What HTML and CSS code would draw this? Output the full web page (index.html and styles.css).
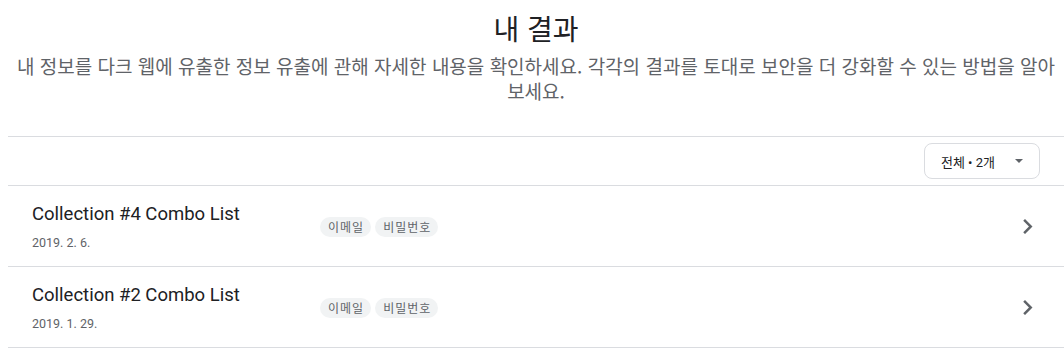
FILE: index.html
```html
<!DOCTYPE html>
<html lang="ko">
<head>
<meta charset="utf-8">
<title>내 결과</title>
<link rel="stylesheet" href="styles.css">
</head>
<body>
<main class="page">
  <header class="header">
    <h1 class="title">내 결과</h1>
    <p class="subtitle">내 정보를 다크 웹에 유출한 정보 유출에 관해 자세한 내용을 확인하세요. 각각의 결과를 토대로 보안을 더 강화할 수 있는 방법을 알아보세요.</p>
  </header>
  <div class="filter-bar">
    <button class="filter" type="button">
      <span class="filter-label">전체 • 2개</span>
      <svg class="caret" width="8" height="4" viewBox="0 0 10 5" aria-hidden="true"><path d="M0 0l5 5 5-5z" fill="#5f6368"/></svg>
    </button>
  </div>
  <ul class="results">
    <li class="result">
      <div class="result-main">
        <div class="result-name">Collection #4 Combo List</div>
        <div class="result-date">2019. 2. 6.</div>
      </div>
      <div class="chips">
        <span class="chip">이메일</span>
        <span class="chip">비밀번호</span>
      </div>
      <svg class="chevron" width="10" height="15" viewBox="8.4 6 8 12" aria-hidden="true"><path d="M10 6L8.59 7.41 13.17 12l-4.58 4.59L10 18l6-6z" fill="#5f6368"/></svg>
    </li>
    <li class="result">
      <div class="result-main">
        <div class="result-name">Collection #2 Combo List</div>
        <div class="result-date">2019. 1. 29.</div>
      </div>
      <div class="chips">
        <span class="chip">이메일</span>
        <span class="chip">비밀번호</span>
      </div>
      <svg class="chevron" width="10" height="15" viewBox="8.4 6 8 12" aria-hidden="true"><path d="M10 6L8.59 7.41 13.17 12l-4.58 4.59L10 18l6-6z" fill="#5f6368"/></svg>
    </li>
  </ul>
</main>
</body>
</html>
```

FILE: styles.css
```css
* { box-sizing: border-box; }

html, body { background: #ffffff; }

body {
  margin: 8px 0 0 8px;
  font-family: "Roboto", "Noto Sans CJK KR", sans-serif;
  color: #202124;
  overflow: hidden;
}

.page {
  width: 1056px;
}

.header {
  text-align: center;
  padding-bottom: 33px;
}

.title {
  margin: 0;
  font-family: "Noto Sans CJK KR", sans-serif;
  font-size: 28px;
  font-weight: 400;
  line-height: 40px;
  color: #202124;
}

.subtitle {
  margin: 5px 0 0;
  padding: 0 8px;
  font-family: "Noto Sans CJK KR", sans-serif;
  font-size: 19px;
  line-height: 25px;
  color: #5f6368;
}

.filter-bar {
  display: flex;
  justify-content: flex-end;
  align-items: center;
  height: 50px;
  padding: 0 24px;
  border-top: 1px solid #dadce0;
  border-bottom: 1px solid #dadce0;
}

.filter {
  display: flex;
  align-items: center;
  gap: 20px;
  height: 36px;
  padding: 0 16px;
  background: #ffffff;
  border: 1px solid #dadce0;
  border-radius: 8px;
  font-family: "Roboto", "Noto Sans CJK KR", sans-serif;
  font-size: 13px;
  color: #202124;
}

.caret { display: block; }

.results {
  list-style: none;
  margin: 0;
  padding: 0;
}

.result {
  display: flex;
  align-items: center;
  height: 81px;
  padding: 1px 31px 0 24px;
  border-bottom: 1px solid #dadce0;
}

.result-main {
  width: 288px;
}

.result-name {
  font-family: "Roboto", "Noto Sans CJK KR", sans-serif;
  font-size: 18.5px;
  line-height: 24px;
  color: #202124;
}

.result-date {
  margin-top: 9px;
  font-family: "Roboto", sans-serif;
  font-size: 12.5px;
  line-height: 16px;
  color: #5f6368;
}

.chips {
  flex: 1;
  display: flex;
  gap: 4px;
}

.chip {
  display: inline-flex;
  align-items: center;
  height: 20px;
  padding: 0 7px 0 8px;
  border-radius: 10px;
  background: #f1f3f4;
  font-family: "Noto Sans CJK KR", sans-serif;
  font-size: 12px;
  letter-spacing: 1px;
  color: #5f6368;
}

.chevron { display: block; }
```
